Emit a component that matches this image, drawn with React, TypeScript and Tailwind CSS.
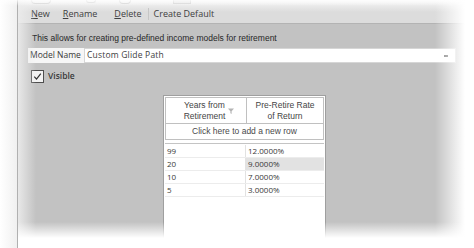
import React from "react";

interface Row {
  years: string;
  rate: string;
  selected?: boolean;
}

const rows: Row[] = [
  { years: "99", rate: "12.0000%" },
  { years: "20", rate: "9.0000%", selected: true },
  { years: "10", rate: "7.0000%" },
  { years: "5", rate: "3.0000%" },
];

const FilterIcon = () => (
  <svg width="6" height="6" viewBox="0 0 6 6" className="shrink-0">
    <path d="M0 0.5 H6 L3.6 3.2 V6 L2.4 5.2 V3.2 Z" fill="#b4b4b4" />
  </svg>
);

const App: React.FC = () => {
  return (
    <div className="relative w-[474px] h-[248px] overflow-hidden bg-white text-[#2b2b2b] font-['Open_Sans',sans-serif]">
      <div className="flex h-full pl-[17px] bg-[linear-gradient(to_right,#fff,#f0f0f0_17px)]">
        <div className="flex flex-col flex-1 border-l border-[#b0b0b0] bg-[#c2c2c2]">
          {/* toolbar */}
          <div className="h-[24px] shrink-0 flex flex-col border-b border-[#b3b3b3] bg-[linear-gradient(to_bottom,#f6f6f6,#dcdcdc_12px)]">
            <div className="h-[7px] flex items-start pl-[13px]">
              <div className="w-[20px] h-[4px] rounded-b-full border border-t-0 border-[#d0d0d0]" />
              <div className="w-[10px] h-[3px] ml-[35px] rounded-b-sm border border-t-0 border-[#d4d4d4]" />
              <div className="w-[12px] h-[4px] ml-[23px] rounded-b-full border border-t-0 border-[#cfcfcf]" />
              <div className="w-[18px] h-[4px] ml-[42px] border border-t-0 border-[#cfcfcf] bg-[#e6e6e6]" />
            </div>
            <div className="flex items-center h-[14px] pl-[13px] text-[9px] text-[#404040]">
              <span>
                <span className="underline underline-offset-1">N</span>ew
              </span>
              <span className="ml-[13px]">
                <span className="underline underline-offset-1">R</span>ename
              </span>
              <span className="ml-[17px]">
                <span className="underline underline-offset-1">D</span>elete
              </span>
              <span className="ml-[6px] w-px h-[12px] bg-[#c6c6c6]" />
              <span className="ml-[5px]">Create Default</span>
            </div>
          </div>

          {/* body */}
          <div className="flex flex-col">
            <p className="mt-[9px] pl-[14px] h-[10px] leading-[10px] text-[8.5px] text-[#262626] font-['Liberation_Sans',sans-serif]">
              This allows for creating pre-defined income models for retirement
            </p>

            <div className="mt-[5px] ml-[10px] flex h-[15px] text-[8.5px]">
              <div className="w-[56px] flex items-center pl-[2px] bg-[#f6f6f6] text-[#383838]">
                Model Name
              </div>
              <div className="w-[372px] flex items-center justify-between pl-[2px] pr-[7px] bg-white border border-[#d6d6d6] text-[#404040] tracking-[0.2px]">
                <span>Custom Glide Path</span>
                <span className="w-[4px] h-[2px] bg-[#7a7a7a]" />
              </div>
            </div>

            <div className="mt-[7px] ml-[13px] flex items-center h-[13px]">
              <div className="w-[13px] h-[13px] flex items-center justify-center border border-[#4e4e4e] bg-[#f3f3f3]">
                <svg width="9" height="9" viewBox="0 0 9 9">
                  <path d="M1.2 4.6 L3.5 7 L7.8 1.6" fill="none" stroke="#333" strokeWidth="1.2" />
                </svg>
              </div>
              <span className="ml-[4px] text-[8.5px] font-semibold text-[#383838]">Visible</span>
            </div>

            {/* grid */}
            <div className="mt-[12px] ml-[145px] w-[163px] h-[150px] border border-[#9f9f9f] bg-white p-px text-[8.5px] font-['Liberation_Sans',sans-serif] text-[#444]">
              <div className="flex h-[27px] border border-[#c0c0c0]">
                <div className="w-[81px] flex items-center justify-center gap-[3px] border-r border-[#c0c0c0] pl-[6px]">
                  <div className="text-center leading-[11px]">
                    Years from
                    <br />
                    Retirement
                  </div>
                  <FilterIcon />
                </div>
                <div className="flex-1 flex items-center justify-center text-center leading-[11px]">
                  <div>
                    Pre-Retire Rate
                    <br />
                    of Return
                  </div>
                </div>
              </div>
              <div className="h-[16px] flex items-center justify-center border-x border-b border-[#c0c0c0] text-[#4a4a4a]">
                Click here to add a new row
              </div>
              <div className="h-[3px]" />
              <div className="border-t border-[#c4c4c4] pt-px font-['Open_Sans',sans-serif] text-[8px] text-[#383838]">
                {rows.map((row) => (
                  <div key={row.years} className="flex h-[13px] border-b border-[#ececec]">
                    <div className="w-[81px] flex items-center pl-[2px] border-r border-[#e2e2e2]">
                      {row.years}
                    </div>
                    <div
                      className={`flex-1 flex items-center pl-[2px] ${
                        row.selected ? "bg-[#e2e2e2]" : ""
                      }`}
                    >
                      {row.rate}
                    </div>
                  </div>
                ))}
              </div>
            </div>
          </div>
        </div>
      </div>

      {/* soft edges of the screenshot */}
      <div className="pointer-events-none absolute top-0 bottom-0 left-[18px] w-[18px] bg-[linear-gradient(to_right,rgba(236,236,236,0.9),rgba(236,236,236,0))]" />
      <div className="pointer-events-none absolute top-0 bottom-0 left-[435px] right-0 bg-[linear-gradient(to_right,rgba(255,255,255,0),#fff_30px)]" />
      <div className="pointer-events-none absolute left-[18px] right-0 top-[222px] bottom-0 bg-[linear-gradient(to_bottom,rgba(255,255,255,0),#fff_16px)]" />
      <div className="pointer-events-none absolute left-0 right-0 top-0 h-[6px] bg-[linear-gradient(to_bottom,rgba(255,255,255,0.8),rgba(255,255,255,0))]" />
    </div>
  );
};

export default App;
